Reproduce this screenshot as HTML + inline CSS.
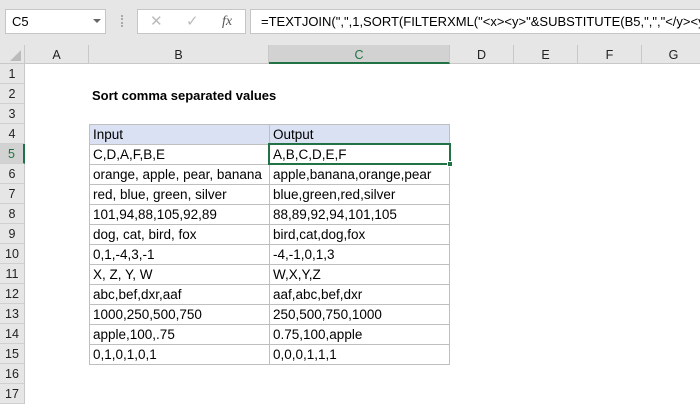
<!DOCTYPE html>
<html><head><meta charset="utf-8"><style>
*{margin:0;padding:0;box-sizing:border-box}
body{width:700px;height:400px;overflow:hidden;background:#fff;font-family:"Liberation Sans",sans-serif;position:relative}
.a{position:absolute}
.top{left:0;top:0;width:700px;height:45px;background:#e6e6e6}
.box{background:#fff;border:1px solid #c6c6c6}
.ch{top:45px;height:19px;background:#e6e6e6;border-right:1px solid #c8c8c8;border-bottom:1px solid #c8c8c8;font-size:12.5px;color:#222;text-align:center;line-height:20px}
.rh{left:0;width:25px;height:20px;background:#e6e6e6;border-bottom:1px solid #d0d0d0;border-right:1px solid #c8c8c8;font-size:12.5px;color:#222;text-align:center;line-height:20px}
.c{height:20px;border-right:1px solid #bfbfbf;border-bottom:1px solid #bfbfbf;font-size:13.5px;line-height:19px;padding-left:3px;color:#000;white-space:nowrap;overflow:hidden}
</style></head><body>
<div class="a top"></div>
<div class="a box" style="left:5px;top:9px;width:101px;height:25px;font-size:13px;line-height:23px;padding-left:6px">C5</div>
<div class="a" style="left:93px;top:19px;width:0;height:0;border-left:4px solid transparent;border-right:4px solid transparent;border-top:4px solid #666"></div>
<div class="a" style="left:121px;top:15px;width:2px;height:12px;border-left:2px dotted #aaa"></div>
<div class="a box" style="left:137px;top:9px;width:109px;height:25px"></div>
<div class="a" style="left:150px;top:12px;font-size:15px;color:#bbb">✕</div>
<div class="a" style="left:186px;top:12px;font-size:15px;color:#bbb">✓</div>
<div class="a" style="left:222px;top:14px;font-size:14px;font-style:italic;font-family:'Liberation Serif',serif;color:#555">fx</div>
<div class="a box" style="left:250px;top:9px;width:460px;height:25px;font-size:13px;line-height:23px;padding-left:10px;white-space:nowrap;overflow:hidden">=TEXTJOIN(",",1,SORT(FILTERXML("&lt;x&gt;&lt;y&gt;"&amp;SUBSTITUTE(B5,",","&lt;/y&gt;&lt;y&gt;")&amp;"&lt;/y&gt;&lt;/x&gt;","//y")))</div>

<div class="a ch" style="left:0;width:25px"></div>
<div class="a" style="left:10px;top:50px;width:0;height:0;border-left:11px solid transparent;border-bottom:11px solid #bbb"></div>
<div class="a ch" style="left:25px;width:64px">A</div>
<div class="a ch" style="left:89px;width:180px">B</div>
<div class="a ch" style="left:269px;width:181px;background:#d2d2d2;color:#217346;border-bottom:2px solid #217346">C</div>
<div class="a ch" style="left:450px;width:64px">D</div>
<div class="a ch" style="left:514px;width:64px">E</div>
<div class="a ch" style="left:578px;width:64px">F</div>
<div class="a ch" style="left:642px;width:64px">G</div>

<div class="a rh" style="top:64px">1</div>
<div class="a rh" style="top:84px">2</div>
<div class="a rh" style="top:104px">3</div>
<div class="a rh" style="top:124px">4</div>
<div class="a rh" style="top:144px;background:#d2d2d2;color:#217346;border-right:2px solid #217346">5</div>
<div class="a rh" style="top:164px">6</div>
<div class="a rh" style="top:184px">7</div>
<div class="a rh" style="top:204px">8</div>
<div class="a rh" style="top:224px">9</div>
<div class="a rh" style="top:244px">10</div>
<div class="a rh" style="top:264px">11</div>
<div class="a rh" style="top:284px">12</div>
<div class="a rh" style="top:304px">13</div>
<div class="a rh" style="top:324px">14</div>
<div class="a rh" style="top:344px">15</div>
<div class="a rh" style="top:364px">16</div>
<div class="a rh" style="top:384px">17</div>

<div class="a" style="left:92px;top:86px;font-size:13px;font-weight:bold;line-height:20px">Sort comma separated values</div>

<div class="a" style="left:89px;top:124px;width:361px;border-left:1px solid #bfbfbf;border-top:1px solid #bfbfbf">
<div style="display:flex;background:#d9e1f2"><div class="c" style="width:180px">Input</div><div class="c" style="width:180px">Output</div></div>
<div style="display:flex"><div class="c" style="width:180px">C,D,A,F,B,E</div><div class="c" style="width:180px">A,B,C,D,E,F</div></div>
<div style="display:flex"><div class="c" style="width:180px">orange, apple, pear, banana</div><div class="c" style="width:180px">apple,banana,orange,pear</div></div>
<div style="display:flex"><div class="c" style="width:180px">red, blue, green, silver</div><div class="c" style="width:180px">blue,green,red,silver</div></div>
<div style="display:flex"><div class="c" style="width:180px">101,94,88,105,92,89</div><div class="c" style="width:180px">88,89,92,94,101,105</div></div>
<div style="display:flex"><div class="c" style="width:180px">dog, cat, bird, fox</div><div class="c" style="width:180px">bird,cat,dog,fox</div></div>
<div style="display:flex"><div class="c" style="width:180px">0,1,-4,3,-1</div><div class="c" style="width:180px">-4,-1,0,1,3</div></div>
<div style="display:flex"><div class="c" style="width:180px">X, Z, Y, W</div><div class="c" style="width:180px">W,X,Y,Z</div></div>
<div style="display:flex"><div class="c" style="width:180px">abc,bef,dxr,aaf</div><div class="c" style="width:180px">aaf,abc,bef,dxr</div></div>
<div style="display:flex"><div class="c" style="width:180px">1000,250,500,750</div><div class="c" style="width:180px">250,500,750,1000</div></div>
<div style="display:flex"><div class="c" style="width:180px">apple,100,.75</div><div class="c" style="width:180px">0.75,100,apple</div></div>
<div style="display:flex"><div class="c" style="width:180px">0,1,0,1,0,1</div><div class="c" style="width:180px">0,0,0,1,1,1</div></div>
</div>

<div class="a" style="left:268px;top:143px;width:183px;height:22px;border:2px solid #217346"></div>
<div class="a" style="left:447px;top:161px;width:6px;height:6px;background:#217346;border:1px solid #fff"></div>
</body></html>
